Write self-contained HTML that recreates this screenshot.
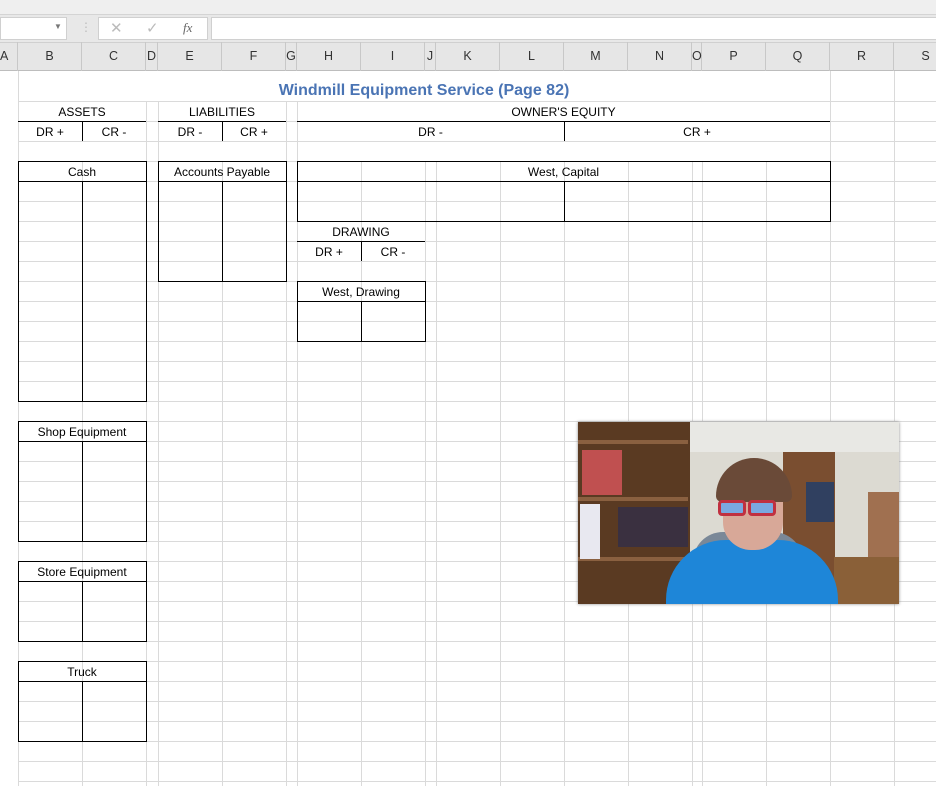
<!DOCTYPE html>
<html><head><meta charset="utf-8">
<style>
*{margin:0;padding:0;box-sizing:border-box}
body{width:936px;height:786px;overflow:hidden;background:#fff;position:relative;font-family:"Liberation Sans",sans-serif;font-size:12px;color:#000}
.a{position:absolute}
.h{position:absolute;height:1px;background:#dadada}
.v{position:absolute;width:1px;background:#dadada}
.bl{position:absolute;background:#000}
.t{position:absolute;text-align:center;line-height:20px;font-size:12px}
.col{position:absolute;top:42px;height:29px;line-height:29px;text-align:center;font-size:12.5px;color:#333;border-right:1px solid #c8c8c8}
</style></head><body>
<div class="a" style="left:0;top:0;width:936px;height:15px;background:#efefef;border-bottom:1px solid #d4d4d4"></div>
<div class="a" style="left:0;top:15px;width:936px;height:27px;background:#e8e8e8"></div>
<div class="a" style="left:0;top:17px;width:67px;height:23px;background:#fff;border:1px solid #d0d0d0"></div>
<div class="a" style="left:54px;top:22px;font-size:8px;color:#777">▼</div>
<div class="a" style="left:80px;top:20px;color:#bbb;font-size:12px">⋮</div>
<div class="a" style="left:98px;top:17px;width:110px;height:23px;background:#fff;border:1px solid #d0d0d0"></div>
<div class="a" style="left:110px;top:19px;color:#bbb;font-size:15px">✕</div>
<div class="a" style="left:146px;top:19px;color:#bbb;font-size:15px">✓</div>
<div class="a" style="left:183px;top:20px;color:#666;font-size:13px;font-style:italic;font-family:'Liberation Serif',serif">fx</div>
<div class="a" style="left:211px;top:17px;width:730px;height:23px;background:#fff;border:1px solid #d0d0d0"></div>
<div class="a" style="left:0;top:42px;width:936px;height:29px;background:#e6e6e6;border-top:1px solid #d0d0d0;border-bottom:1px solid #bdbdbd"></div>
<div class="col" style="left:0;width:18px;text-align:left">A</div>
<div class="col" style="left:18px;width:64px">B</div>
<div class="col" style="left:82px;width:64px">C</div>
<div class="col" style="left:146px;width:12px">D</div>
<div class="col" style="left:158px;width:64px">E</div>
<div class="col" style="left:222px;width:64px">F</div>
<div class="col" style="left:286px;width:11px">G</div>
<div class="col" style="left:297px;width:64px">H</div>
<div class="col" style="left:361px;width:64px">I</div>
<div class="col" style="left:425px;width:11px">J</div>
<div class="col" style="left:436px;width:64px">K</div>
<div class="col" style="left:500px;width:64px">L</div>
<div class="col" style="left:564px;width:64px">M</div>
<div class="col" style="left:628px;width:64px">N</div>
<div class="col" style="left:692px;width:10px">O</div>
<div class="col" style="left:702px;width:64px">P</div>
<div class="col" style="left:766px;width:64px">Q</div>
<div class="col" style="left:830px;width:64px">R</div>
<div class="col" style="left:894px;width:64px">S</div>
<div id="g"></div>
<script>
var s='';
for(var y=101;y<786;y+=20){s+='<div class="h" style="left:18px;top:'+y+'px;width:918px"></div>';}
var xs=[18,82,146,158,222,286,297,361,425,436,500,564,628,692,702,766,830,894];
xs.forEach(function(x){var t;
 if(x==18||x>=830)t=71; else if(x==146||x==158||x==286||x==297)t=101; else t=161;
 s+='<div class="v" style="left:'+x+'px;top:'+t+'px;height:'+(786-t)+'px"></div>';});
document.getElementById('g').innerHTML=s;
</script>
<div class="a" style="left:18px;top:82px;width:812px;text-align:center;font-weight:bold;font-size:16px;color:#4a74b4">Windmill Equipment Service (Page 82)</div>
<div class="t" style="left:18px;top:102px;width:128px">ASSETS</div>
<div class="t" style="left:158px;top:102px;width:128px">LIABILITIES</div>
<div class="t" style="left:297px;top:102px;width:533px">OWNER'S EQUITY</div>
<div class="bl" style="left:18px;top:121px;width:128px;height:1px"></div>
<div class="bl" style="left:158px;top:121px;width:128px;height:1px"></div>
<div class="bl" style="left:297px;top:121px;width:533px;height:1px"></div>
<div class="bl" style="left:82px;top:121px;width:1px;height:20px"></div>
<div class="bl" style="left:222px;top:121px;width:1px;height:20px"></div>
<div class="bl" style="left:564px;top:121px;width:1px;height:20px"></div>
<div class="t" style="left:18px;top:122px;width:64px">DR +</div>
<div class="t" style="left:82px;top:122px;width:64px">CR -</div>
<div class="t" style="left:158px;top:122px;width:64px">DR -</div>
<div class="t" style="left:222px;top:122px;width:64px">CR +</div>
<div class="t" style="left:297px;top:122px;width:267px">DR -</div>
<div class="t" style="left:564px;top:122px;width:266px">CR +</div>
<div id="ta"></div>
<script>
function T(x,y,w,h,split,label){
 var r='<div class="a" style="left:'+x+'px;top:'+y+'px;width:'+(w+1)+'px;height:'+(h+1)+'px;border:1px solid #000"></div>';
 r+='<div class="bl" style="left:'+x+'px;top:'+(y+20)+'px;width:'+w+'px;height:1px"></div>';
 r+='<div class="bl" style="left:'+split+'px;top:'+(y+20)+'px;width:1px;height:'+(h-20)+'px"></div>';
 r+='<div class="t" style="left:'+x+'px;top:'+(y+1)+'px;width:'+w+'px">'+label+'</div>';
 return r;}
var q='';
q+=T(18,161,128,240,82,'Cash');
q+=T(158,161,128,120,222,'Accounts Payable');
q+=T(297,161,533,60,564,'West, Capital');
q+=T(297,281,128,60,361,'West, Drawing');
q+=T(18,421,128,120,82,'Shop Equipment');
q+=T(18,561,128,80,82,'Store Equipment');
q+=T(18,661,128,80,82,'Truck');
document.getElementById('ta').innerHTML=q;
</script>
<div class="t" style="left:297px;top:222px;width:128px">DRAWING</div>
<div class="bl" style="left:297px;top:241px;width:128px;height:1px"></div>
<div class="bl" style="left:361px;top:241px;width:1px;height:20px"></div>
<div class="t" style="left:297px;top:242px;width:64px">DR +</div>
<div class="t" style="left:361px;top:242px;width:64px">CR -</div>
<div class="a" style="left:578px;top:422px;width:321px;height:182px;overflow:hidden;background:#dcdad2;box-shadow:0 0 3px #888">
 <div class="a" style="left:0;top:0;width:112px;height:182px;background:#5a3a22"></div>
 <div class="a" style="left:0;top:18px;width:110px;height:4px;background:#8a6040"></div>
 <div class="a" style="left:0;top:75px;width:110px;height:4px;background:#8a6040"></div>
 <div class="a" style="left:0;top:135px;width:110px;height:4px;background:#8a6040"></div>
 <div class="a" style="left:2px;top:82px;width:20px;height:55px;background:#e8e8f0"></div>
 <div class="a" style="left:40px;top:85px;width:70px;height:40px;background:#3a3040"></div>
 <div class="a" style="left:4px;top:28px;width:40px;height:45px;background:#c05050"></div>
 <div class="a" style="left:112px;top:0;width:210px;height:30px;background:#e8e8e4"></div>
 <div class="a" style="left:205px;top:30px;width:52px;height:152px;background:#7a4e30"></div>
 <div class="a" style="left:228px;top:60px;width:28px;height:40px;background:#304060"></div>
 <div class="a" style="left:256px;top:135px;width:65px;height:47px;background:#8a6038"></div>
 <div class="a" style="left:290px;top:70px;width:31px;height:65px;background:#a07050"></div>
 <div class="a" style="left:115px;top:110px;width:110px;height:60px;background:#7a8898;border-radius:30px 30px 0 0"></div>
 <div class="a" style="left:88px;top:118px;width:172px;height:80px;background:#1e86d8;border-radius:60px 60px 0 0"></div>
 <div class="a" style="left:145px;top:48px;width:60px;height:80px;background:#d8a898;border-radius:30px 30px 28px 28px"></div>
 <div class="a" style="left:138px;top:36px;width:76px;height:44px;background:#6a4a38;border-radius:38px 38px 6px 6px"></div>
 <div class="a" style="left:140px;top:78px;width:28px;height:16px;border:3px solid #c03040;background:#7aa8e0;border-radius:4px"></div>
 <div class="a" style="left:170px;top:78px;width:28px;height:16px;border:3px solid #c03040;background:#7aa8e0;border-radius:4px"></div>
</div>
</body></html>
